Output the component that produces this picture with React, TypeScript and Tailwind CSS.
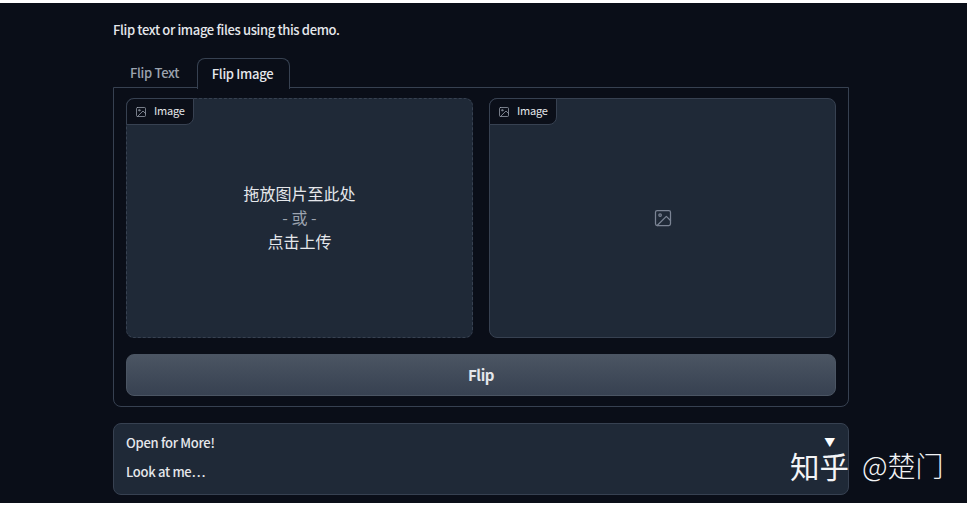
import { useState } from "react";

const FONT = { fontFamily: '"Noto Sans CJK SC", sans-serif' };

function ImageIcon({ className }: { className: string }) {
  return (
    <svg viewBox="0 0 24 24" fill="none" stroke="currentColor" strokeWidth="1.5" strokeLinecap="round" strokeLinejoin="round" className={className}>
      <rect x="3" y="3" width="18" height="18" rx="2" />
      <circle cx="8.5" cy="8.5" r="1.5" />
      <path d="M21 15l-5-5L5 21" />
    </svg>
  );
}

function ImageLabel() {
  return (
    <div className="absolute -left-px -top-px flex h-[27px] w-[68px] items-center gap-[7px] rounded-br-lg rounded-tl-lg border border-[#374151] bg-[#0b0f19] pb-[3px] pl-[8px] text-[11px] tracking-[-0.2px] text-[#e5e7eb]">
      <ImageIcon className="mt-[3px] h-[12px] w-[12px] text-[#9ca3af]" />
      Image
    </div>
  );
}

export default function App() {
  const [tab, setTab] = useState("image");

  return (
    <div style={FONT} className="relative h-[507px] w-[969px] overflow-hidden bg-white pb-[4px] pr-[2px] pt-[3px]">
      <div className="flex h-full flex-col bg-[#0a0e18] pl-[113px] pr-[118px]">
        <p className="mt-[18px] h-[18px] text-[13px] font-medium leading-[18px] tracking-[-0.35px] text-[#e5e7eb]">Flip text or image files using this demo.</p>

        {/* Onglets */}
        <div className="mt-[19px] flex h-[30px] pl-[1px]">
          <button onClick={() => setTab("text")} className="w-[83px] pr-[2px] text-[13px] font-medium tracking-[-0.3px] text-[#9ca3af]">Flip Text</button>
          <button onClick={() => setTab("image")} className="relative z-10 h-[31px] w-[93px] rounded-t-lg border border-b-0 border-[#374151] bg-[#0a0e18] pr-[2px] text-[13px] font-medium tracking-[-0.3px] text-[#e5e7eb]">Flip Image</button>
        </div>

        {/* Panneau */}
        <div className="-mt-px flex h-[320px] flex-col rounded-b-lg border border-[#374151] px-[12px] pt-[10px]">
          <div className="flex gap-[16px]">
            <div className="relative flex h-[240px] w-[347px] flex-col items-center justify-center rounded-lg border border-dashed border-[#374151] bg-[#1f2937] pb-[2px] text-[16px] leading-[24px] text-[#e5e7eb]">
              <ImageLabel />
              <span>拖放图片至此处</span>
              <span className="text-[#9ca3af]">- 或 -</span>
              <span>点击上传</span>
            </div>
            <div className="relative flex h-[240px] w-[347px] items-center justify-center rounded-lg border border-[#374151] bg-[#1f2937]">
              <ImageLabel />
              <ImageIcon className="h-[20px] w-[20px] text-[#7b8494]" />
            </div>
          </div>
          <button className="mt-[16px] h-[42px] w-full rounded-lg border border-[#4b5563] bg-gradient-to-b from-[#4b5563] to-[#374151] text-[15px] font-bold tracking-[-0.4px] text-[#e5e7eb]">Flip</button>
        </div>

        {/* Accordéon */}
        <div className="mt-[16px] h-[72px] rounded-lg border border-[#374151] bg-[#1f2937] px-[12px] pt-[10px] text-[13px] font-medium tracking-[-0.3px] text-[#e5e7eb]">
          <div className="flex items-start justify-between">
            <span className="leading-[18px]">Open for More!</span>
            <span className="mr-[1px] text-[11px] leading-[16px] text-white">▼</span>
          </div>
          <p className="mt-[11px] leading-[18px]">Look at me…</p>
        </div>
      </div>

      {/* Filigrane */}
      <div className="absolute left-[790px] top-[445px] flex gap-[13px] whitespace-nowrap leading-[40px] text-[#f3f4f6]">
        <span className="text-[29.5px]">知乎</span>
        <span className="text-[28px] font-light">@楚门</span>
      </div>
    </div>
  );
}
